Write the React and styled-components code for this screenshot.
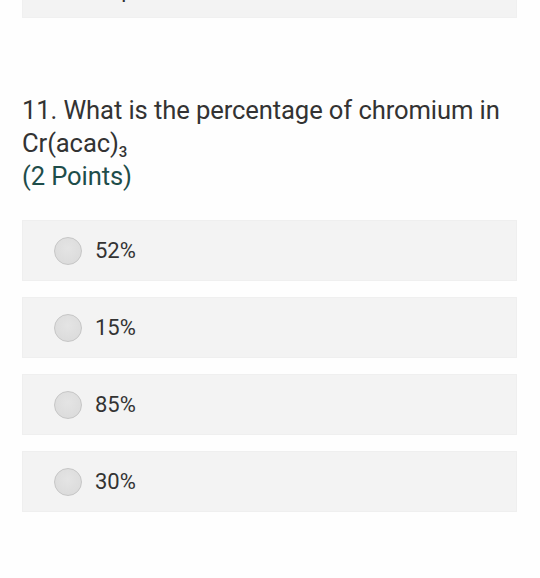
import React from "react";
import styled, { createGlobalStyle } from "styled-components";

const Global = createGlobalStyle`
  html, body { margin: 0; padding: 0; background: #fefefe; }
  body { font-family: Roboto, "Noto Sans", Arial, sans-serif; overflow: hidden; }
`;

const Page = styled.div`
  width: 540px;
  height: 578px;
  padding: 0 23px 0 22px;
  box-sizing: border-box;
  overflow: hidden;
`;

const PrevOption = styled.div`
  height: 61px;
  margin-top: -43px;
  background: #f3f3f3;
  border: 1px solid #f0f0f0;
  box-sizing: border-box;
  display: flex;
  align-items: flex-start;
  padding: 21px 0 0 68px;
  font-size: 22px;
  color: #333;
  line-height: 22px;
`;

const Question = styled.div`
  margin-top: 76px;
  font-size: 25.6px;
  line-height: 33px;
  color: #333;
  letter-spacing: -0.1px;
`;

const Sub = styled.sub`
  font-size: 15px;
  font-weight: 500;
  vertical-align: -5px;
  line-height: 0;
`;

const Points = styled.div`
  color: #1e4d4a;
`;

const Options = styled.div`
  margin-top: 27px;
  display: flex;
  flex-direction: column;
  gap: 16px;
`;

const Option = styled.label`
  height: 61px;
  background: #f3f3f3;
  border: 1px solid #efefef;
  box-sizing: border-box;
  display: flex;
  align-items: center;
  padding-left: 31px;
  gap: 13px;
`;

const Radio = styled.span`
  width: 28px;
  height: 28px;
  border-radius: 50%;
  box-sizing: border-box;
  border: 1px solid #c6c6c6;
  background: radial-gradient(circle at 50% 40%, #e4e4e4 0%, #d9d9d9 100%);
  flex: none;
`;

const Label = styled.span`
  font-size: 22px;
  color: #333;
`;

const options = ["52%", "15%", "85%", "30%"];

export default function App() {
  return (
    <>
      <Global />
      <Page>
        <PrevOption>
          <span>10 pm</span>
        </PrevOption>
        <Question>
          11. What is the percentage of chromium in
          <br />
          Cr(acac)<Sub>3</Sub>
          <Points>(2 Points)</Points>
        </Question>
        <Options>
          {options.map((o) => (
            <Option key={o}>
              <Radio />
              <Label>{o}</Label>
            </Option>
          ))}
        </Options>
      </Page>
    </>
  );
}
